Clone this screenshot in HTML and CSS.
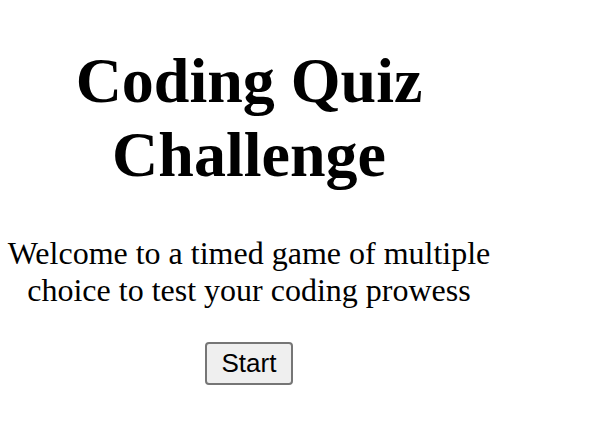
FILE: index.html
```html
<!DOCTYPE html>
<html lang="en">
<head>
  <meta charset="UTF-8" />
  <meta name="viewport" content="width=device-width, initial-scale=1.0"/>
  <title>Coding Quiz Challenge</title>
  <link rel="stylesheet" href="styles.css">
</head>
<body>
  <div class="intro">
    <h1>Coding Quiz Challenge</h1>
    <p>Welcome to a timed game of multiple choice to test your coding prowess</p>
    <button class="btn-start" id="startBtn">Start</button>
  </div>
</body>
</html>
```

FILE: styles.css
```css
body {
  margin: 0;
  font-family: "Liberation Serif", "Times New Roman", serif;
  background: #fff;
  color: #000;
}
.intro {
  width: 498px;
  display: flex;
  flex-direction: column;
  align-items: center;
  text-align: center;
}
.intro h1 {
  font-size: 64px;
  margin: 44px 0 0;
}
.intro p {
  font-size: 32px;
  margin: 43px 0 0;
}
.btn-start {
  margin-top: 33px;
  font-family: "Liberation Sans", Arial, sans-serif;
  font-size: 26px;
  padding: 4px 15px;
  background: #efefef;
  border: 2px solid #767676;
  border-radius: 4px;
  color: #000;
}
```
